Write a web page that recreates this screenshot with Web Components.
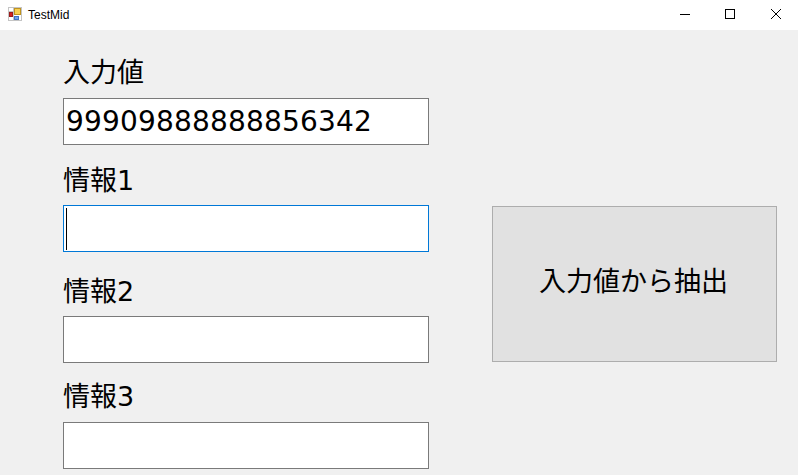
<!DOCTYPE html>
<html lang="ja"><head><meta charset="utf-8"><style>
html,body{margin:0;padding:0;height:100%;overflow:hidden;background:#f0f0f0}
</style></head><body>
<app-window>
  <win-titlebar slot="bar">TestMid</win-titlebar>
  <form-field label="入力値" value="99909888888856342" style="--top:25px;--gap:7px"></form-field>
  <form-field label="情報1" focused style="--top:18px;--gap:6px"></form-field>
  <form-field label="情報2" style="--top:22px;--gap:6px"></form-field>
  <form-field label="情報3" style="--top:16px;--gap:7px"></form-field>
  <action-button slot="side">入力値から抽出</action-button>
</app-window>
<script>
const JP='"DejaVu Sans","Noto Sans CJK JP",sans-serif';
customElements.define('app-window',class extends HTMLElement{constructor(){super();this.attachShadow({mode:'open'}).innerHTML=`<style>
:host{display:flex;flex-direction:column;width:798px;height:475px;background:#f0f0f0;overflow:hidden}
.main{display:grid;grid-template-columns:366px 285px;column-gap:63px;padding-left:63px;align-items:start}
.col{display:flex;flex-direction:column}
.side{padding-top:176px}
</style><slot name="bar"></slot><div class="main"><div class="col"><slot></slot></div><div class="side"><slot name="side"></slot></div></div>`}});
customElements.define('win-titlebar',class extends HTMLElement{constructor(){super();this.attachShadow({mode:'open'}).innerHTML=`<style>
:host{display:flex;align-items:center;height:30px;background:#fff;flex:none}
.icon{margin:0 0 2px 8px;width:14px;height:14px;display:block;flex:none}
.t{margin-left:6px;font:12px/30px "Liberation Sans",Arial,sans-serif;color:#000;flex:1}
.btns{display:flex;margin-right:16px;padding-bottom:2px}
.btns svg{display:block;width:12px;height:12px}
.btns svg+svg{margin-left:33px}
.btns svg:last-child{margin-left:34px}
</style>
<svg class="icon" viewBox="0 0 14 14" shape-rendering="crispEdges"><path d="M.5 .5H13.5V13.5H.5ZM.5 4.5H5.5M5.5 .5V13.5M.5 9.5H5.5" fill="#fff" stroke="#c4c4c4"/><rect x="1.5" y="5.5" width="3" height="4" fill="#d42020" stroke="#9a1c1c"/><rect x="6.5" y="1.5" width="6" height="6" fill="#f8cf4f" stroke="#bf931f"/><rect x="6.5" y="9.5" width="4" height="3" fill="#6fa3ea" stroke="#3f72c4"/></svg>
<span class="t"><slot></slot></span>
<div class="btns">
<svg viewBox="0 0 12 12"><path d="M1 6.5H11" stroke="#000" fill="none"/></svg>
<svg viewBox="0 0 12 12"><rect x="1.5" y="1.5" width="9" height="9" stroke="#000" fill="none"/></svg>
<svg viewBox="0 0 12 12"><path d="M1 1L11 11M11 1L1 11" stroke="#000" fill="none"/></svg>
</div>`}});
customElements.define('form-field',class extends HTMLElement{connectedCallback(){if(this.shadowRoot)return;const f=this.hasAttribute('focused');this.attachShadow({mode:'open'}).innerHTML=`<style>
:host{display:block;padding-top:var(--top,14px)}
.l{font:27px/36px ${JP};color:#000;height:36px;margin-bottom:var(--gap,8px)}
.box{box-sizing:border-box;height:47px;width:366px;background:#fff;border:1px solid ${f?'#0078d7':'#7a7a7a'};padding-left:2px;font:28px/45px "DejaVu Sans",sans-serif;letter-spacing:.18px;color:#000;display:flex;align-items:center;white-space:nowrap}
.caret{width:1px;height:42px;background:#000}
</style><div class="l">${this.getAttribute('label')}</div><div class="box">${f?'<span class="caret"></span>':''}<span>${this.getAttribute('value')||''}</span></div>`}});
customElements.define('action-button',class extends HTMLElement{constructor(){super();this.attachShadow({mode:'open'}).innerHTML=`<style>
:host{display:flex;box-sizing:border-box;width:285px;height:156px;background:#e1e1e1;border:1px solid #adadad;align-items:center;justify-content:center;padding-bottom:4px;padding-right:2px;font:27px/36px ${JP};color:#000}
</style><slot></slot>`}});
</script></body></html>
